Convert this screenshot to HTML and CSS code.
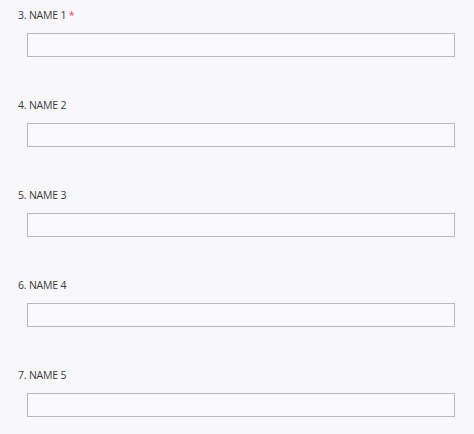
FILE: index.html
```html
<!DOCTYPE html>
<html>
<head>
<meta charset="utf-8">
<link rel="stylesheet" href="styles.css">
</head>
<body>
<div class="form">
  <div class="question">
    <div class="label">3. NAME 1 <span class="req">*</span></div>
    <input class="field" type="text">
  </div>
  <div class="question">
    <div class="label">4. NAME 2</div>
    <input class="field" type="text">
  </div>
  <div class="question">
    <div class="label">5. NAME 3</div>
    <input class="field" type="text">
  </div>
  <div class="question">
    <div class="label">6. NAME 4</div>
    <input class="field" type="text">
  </div>
  <div class="question">
    <div class="label">7. NAME 5</div>
    <input class="field" type="text">
  </div>
</div>
</body>
</html>
```
FILE: styles.css
```css
html, body {
  margin: 0;
  padding: 0;
  background: #f8f8fb;
}
.form {
  display: flex;
  flex-direction: column;
  gap: 40px;
  padding: 7px 19px 0 18px;
  font-family: "Open Sans", "Noto Sans", sans-serif;
}
.question {
  display: flex;
  flex-direction: column;
}
.label {
  font-size: 10.5px;
  line-height: 16px;
  color: #3a3a3a;
  letter-spacing: -0.2px;
}
.req {
  color: #e0505a;
}
.field {
  margin: 10px 0 0 9px;
  height: 24px;
  box-sizing: border-box;
  border: 1px solid #b9b9bd;
  background: #f9f9fb;
  outline: none;
  padding: 0 6px;
}
```
